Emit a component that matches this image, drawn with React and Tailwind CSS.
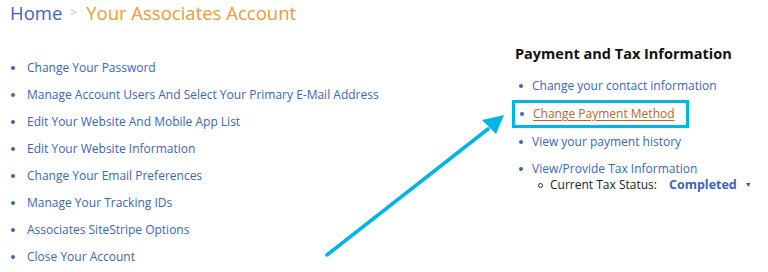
import React from 'react';

const accountLinks = [
    'Change Your Password',
    'Manage Account Users And Select Your Primary E-Mail Address',
    'Edit Your Website And Mobile App List',
    'Edit Your Website Information',
    'Change Your Email Preferences',
    'Manage Your Tracking IDs',
    'Associates SiteStripe Options',
    'Close Your Account',
];

const font = { fontFamily: '"Open Sans", "Noto Sans", Arial, sans-serif' };

export default function App() {
    return (
        <div className="relative w-[768px] h-[272px] bg-white overflow-hidden" style={font}>
            {/* Breadcrumb */}
            <div className="flex items-center pl-[10px] h-[25px] text-[18.5px] leading-[25px]">
                <span className="text-[#3a64c4]">Home</span>
                <span className="text-[#c8c8c8] text-[12px] ml-[8px] mr-[9px]">&gt;</span>
                <span className="text-[#f39a35]">Your Associates Account</span>
            </div>

            <div className="flex pt-[29px]">
                {/* Left list */}
                <ul className="w-[515px] pl-[11px] text-[12px] text-[#3a64c4]">
                    {accountLinks.map((label) => (
                        <li key={label} className="flex items-center h-[27px]">
                            <span className="w-[4px] h-[4px] rounded-full bg-[#3a64c4] mr-[12px]" />
                            {label}
                        </li>
                    ))}
                </ul>

                {/* Right column */}
                <div className="-mt-[14px]">
                    <h3 className="text-[14.5px] font-bold text-[#111] h-[28px] flex items-center">
                        Payment and Tax Information
                    </h3>
                    <ul className="mt-[4px] text-[12px] text-[#3a64c4]">
                        <li className="flex items-center h-[28px] pl-[4px]">
                            <span className="w-[4px] h-[4px] rounded-full bg-[#3a64c4] mr-[9px]" />
                            Change your contact information
                        </li>
                        <li className="h-[28px] -ml-[3px]">
                            <div className="flex items-center w-[177px] h-[28px] pl-[5px] border-[3px] border-[#00b5e8]">
                                <span className="w-[4px] h-[4px] rounded-full bg-[#3a64c4] mr-[9px]" />
                                <span className="text-[#c0632a] underline underline-offset-2">Change Payment Method</span>
                            </div>
                        </li>
                        <li className="flex items-center h-[27px] pl-[4px]">
                            <span className="w-[4px] h-[4px] rounded-full bg-[#3a64c4] mr-[9px]" />
                            View your payment history
                        </li>
                        <li className="pl-[4px]">
                            <div className="flex items-center h-[27px]">
                                <span className="w-[4px] h-[4px] rounded-full bg-[#3a64c4] mr-[9px]" />
                                View/Provide Tax Information
                            </div>
                            <div className="flex items-center -mt-[6px] h-[18px] pl-[19px] text-[#222]">
                                <span className="w-[5px] h-[5px] rounded-full border border-[#333] mr-[7px]" />
                                Current Tax Status:
                                <span className="ml-[12px] font-bold text-[12.5px] text-[#3a64c4]">Completed</span>
                                <span className="ml-[8px] text-[7px] text-[#555]">▼</span>
                            </div>
                        </li>
                    </ul>
                </div>
            </div>

            {/* Annotation arrow */}
            <svg className="absolute inset-0 pointer-events-none" width="768" height="272" viewBox="0 0 768 272">
                <line x1="327" y1="255" x2="488" y2="129" stroke="#00b5e8" strokeWidth="3.5" strokeLinecap="round" />
                <polygon points="504,115 482,120 496,134" fill="#00b5e8" />
            </svg>
        </div>
    );
}
